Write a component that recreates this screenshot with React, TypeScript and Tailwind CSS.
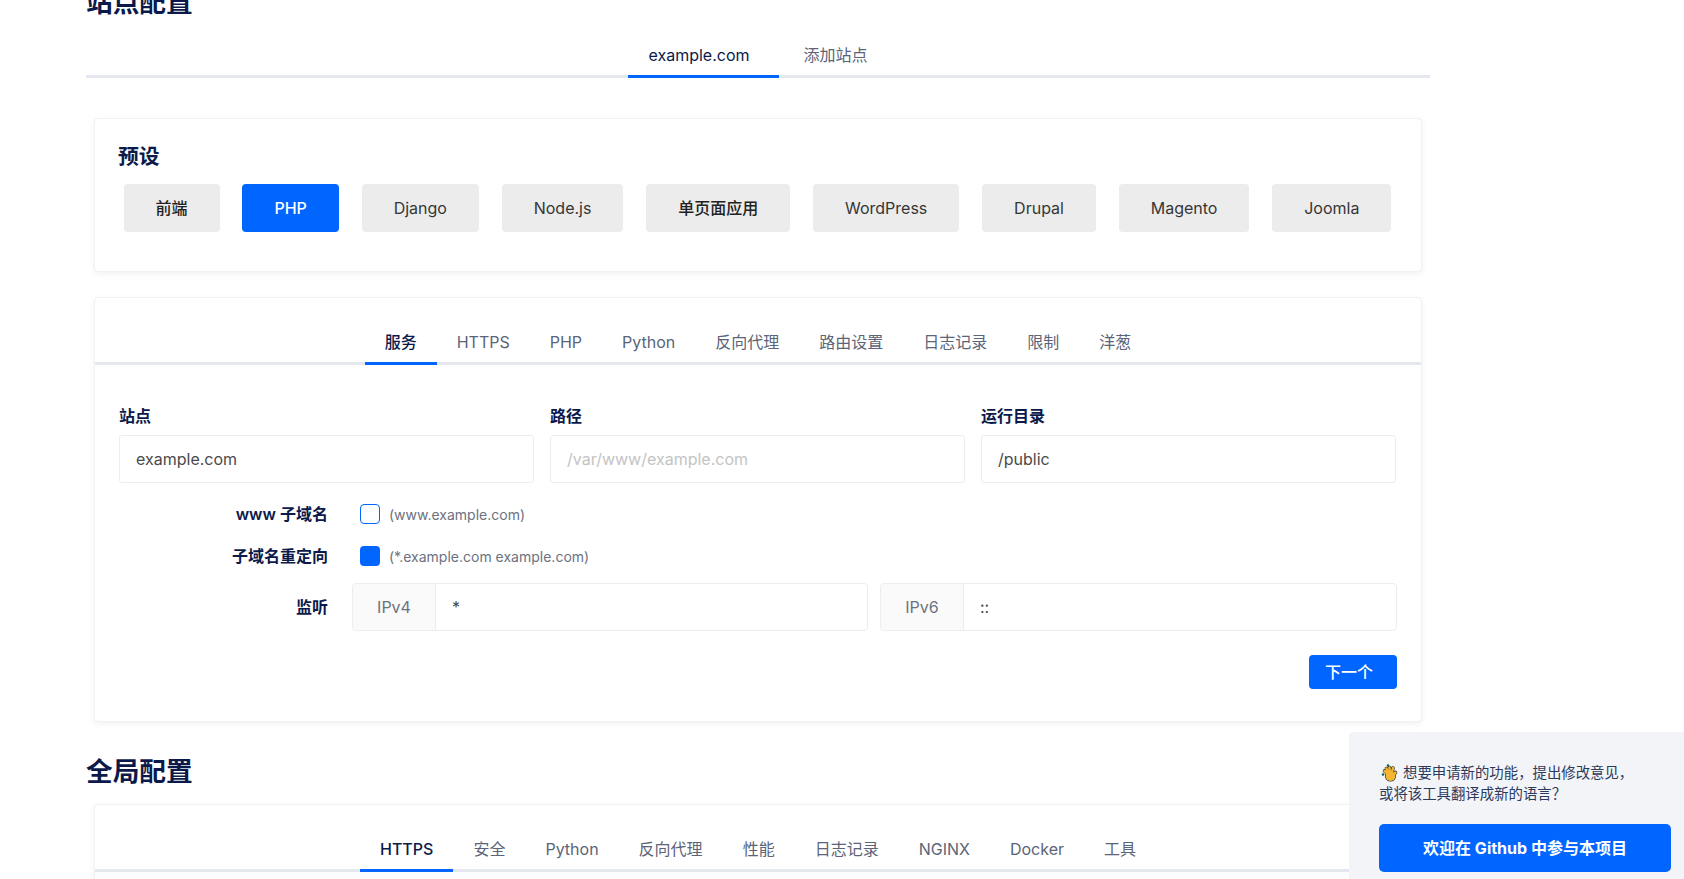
const tabs1 = ["服务", "HTTPS", "PHP", "Python", "反向代理", "路由设置", "日志记录", "限制", "洋葱"];
const tabs2 = ["HTTPS", "安全", "Python", "反向代理", "性能", "日志记录", "NGINX", "Docker", "工具"];
const presets = ["前端", "PHP", "Django", "Node.js", "单页面应用", "WordPress", "Drupal", "Magento", "Joomla"];

function Card({ className, children }: { className: string; children: React.ReactNode }) {
  return (
    <div className={`mx-2 rounded-[4px] border border-[#f1f1f1] bg-white shadow-[0_2px_6px_rgba(0,0,0,0.06)] ${className}`}>
      {children}
    </div>
  );
}

function TabBar({ items }: { items: string[] }) {
  return (
    <div className="flex justify-center border-b-[3px] border-[#e5e7ef]">
      {items.map((t, i) => (
        <div
          key={t}
          className={
            i === 0
              ? "-mb-[3px] border-b-[3px] border-[#0066ff] px-5 pb-2 text-[16px] leading-6 font-medium text-[#0b1a4a]"
              : "-mb-[3px] border-b-[3px] border-transparent px-5 pb-2 text-[16px] leading-6 text-[#5b6478]"
          }
        >
          {t}
        </div>
      ))}
    </div>
  );
}

function Field({ label, value, placeholder }: { label: string; value?: string; placeholder?: string }) {
  return (
    <div>
      <div className="mb-[7px] text-[16px] leading-6 font-semibold text-[#0b1a4a]">{label}</div>
      <input
        readOnly
        value={value}
        placeholder={placeholder}
        className="h-[48px] w-full rounded-[3px] border border-[#ededed] px-4 text-[16px] text-[#4a4a4a] outline-none placeholder:text-[#c4c4c4]"
      />
    </div>
  );
}

function CheckRow({ label, hint, checked }: { label: string; hint: string; checked?: boolean }) {
  return (
    <div className="flex h-[42px] items-center">
      <div className="w-[209px] text-right text-[16px] font-semibold text-[#0b1a4a]">{label}</div>
      <div
        className={
          checked
            ? "ml-[32px] h-5 w-5 rounded-[4px] bg-[#0066ff]"
            : "ml-[32px] h-5 w-5 rounded-[4px] border border-[#0066ff] bg-white"
        }
      />
      <div className="ml-[9px] text-[14px] text-[#6b7280]">{hint}</div>
    </div>
  );
}

function AddonInput({ addon, value, className }: { addon: string; value: string; className: string }) {
  return (
    <div className={`flex h-[48px] overflow-hidden rounded-[4px] border border-[#ededed] ${className}`}>
      <div className="flex w-[83px] items-center justify-center border-r border-[#ededed] bg-[#fafafa] text-[16px] text-[#6b7280]">
        {addon}
      </div>
      <div className="flex flex-1 items-center px-4 text-[16px] text-[#4a4a4a]">{value}</div>
    </div>
  );
}

function WaveIcon() {
  return (
    <svg viewBox="0 0 20 20" className="mr-1 inline-block h-5 w-5 align-[-5px]">
      <g fill="none" strokeLinecap="round">
        <path d="M10 12 5.5 8M10 12 7.5 5.5M11 11 10.5 4.5M12.5 11l1.5-6M14 13l2.5-3.5" stroke="#2f3a2c" strokeWidth="3.6" />
      </g>
      <circle cx="11.5" cy="13" r="5.6" fill="#2f3a2c" />
      <g fill="none" strokeLinecap="round">
        <path d="M10 12 5.5 8M10 12 7.5 5.5M11 11 10.5 4.5M12.5 11l1.5-6M14 13l2.5-3.5" stroke="#f5b52e" strokeWidth="2.4" />
      </g>
      <circle cx="11.5" cy="13" r="4.9" fill="#f5b52e" />
      <circle cx="4" cy="11.5" r="1.2" fill="#0f5a5a" />
      <circle cx="9" cy="2.5" r="1.2" fill="#0f5a5a" />
    </svg>
  );
}

export default function App() {
  return (
    <div
      className="relative h-[879px] overflow-hidden bg-white"
      style={{ fontFamily: 'Inter, "Noto Sans CJK SC", sans-serif' }}
    >
      <div className="mx-[86px] w-[1344px]">
        <h1 className="-mt-[18px] text-[26.7px] leading-[40px] font-bold text-[#0b1a4a]">站点配置</h1>

        <div className="mt-[21px] flex justify-center border-b-[3px] border-[#e5e7ef]">
          <div className="-mb-[3px] border-b-[3px] border-[#0066ff] pr-[29px] pb-2 pl-5 text-[16px] leading-6 text-[#0b1a4a]">
            example.com
          </div>
          <div className="ml-[5px] px-5 pb-2 text-[16px] leading-6 text-[#5b6478]">添加站点</div>
        </div>

        <Card className="mt-[40px] h-[154px] px-6 pt-[23px]">
          <div className="-ml-px text-[20.8px] leading-[30px] font-bold text-[#0b1a4a]">预设</div>
          <div className="mt-3 flex justify-center gap-[22.8px] pr-px">
            {presets.map((p) => (
              <div
                key={p}
                className={
                  p === "PHP"
                    ? "flex h-[48px] items-center rounded-[4px] bg-[#0066ff] px-8 text-[16px] font-medium text-white"
                    : p === "前端" || p === "单页面应用"
                      ? "flex h-[48px] items-center rounded-[4px] bg-[#ececec] px-8 text-[16px] font-medium text-[#222222]"
                      : "flex h-[48px] items-center rounded-[4px] bg-[#ececec] px-8 text-[16px] text-[#363636]"
                }
              >
                {p}
              </div>
            ))}
          </div>
        </Card>

        <Card className="mt-[25px] h-[425px]">
          <div className="pt-8">
            <TabBar items={tabs1} />
          </div>
          <div className="px-6 pt-[39px]">
            <div className="grid grid-cols-3 gap-4 pr-[1px]">
              <Field label="站点" value="example.com" />
              <Field label="路径" placeholder="/var/www/example.com" />
              <Field label="运行目录" value="/public" />
            </div>
            <div className="mt-[10px]">
              <CheckRow label="www 子域名" hint="(www.example.com)" />
              <CheckRow label="子域名重定向" hint="(*.example.com example.com)" checked />
            </div>
            <div className="mt-[6px] flex items-center">
              <div className="w-[209px] text-right text-[16px] font-semibold text-[#0b1a4a]">监听</div>
              <AddonInput addon="IPv4" value="*" className="ml-[24px] w-[516px]" />
              <AddonInput addon="IPv6" value="::" className="ml-[12px] flex-1" />
            </div>
            <div className="mt-6 flex justify-end">
              <div className="flex h-[34px] items-center rounded-[4px] bg-[#0066ff] pr-6 pl-4 text-[16px] font-medium text-white">
                下一个
              </div>
            </div>
          </div>
        </Card>

        <h2 className="mt-[29px] text-[26.7px] leading-[40px] font-bold text-[#0b1a4a]">全局配置</h2>

        <Card className="mt-[13px] h-[200px]">
          <div className="pt-8">
            <TabBar items={tabs2} />
          </div>
        </Card>
      </div>

      <div className="absolute right-0 bottom-0 h-[147px] w-[335px] rounded-tl-[4px] bg-[#f3f4f8] pt-[30px] pr-[13px] pl-[30px]">
        <p className="text-[14.4px] leading-[21px] text-[#2c3a5c]">
          <WaveIcon />
          想要申请新的功能，提出修改意见，
          <br />
          或将该工具翻译成新的语言？
        </p>
        <div className="mt-[20px] flex h-[48px] items-center justify-center rounded-[5px] bg-[#0066ff] text-[16px] font-bold text-white">
          欢迎在 Github 中参与本项目
        </div>
      </div>
    </div>
  );
}
